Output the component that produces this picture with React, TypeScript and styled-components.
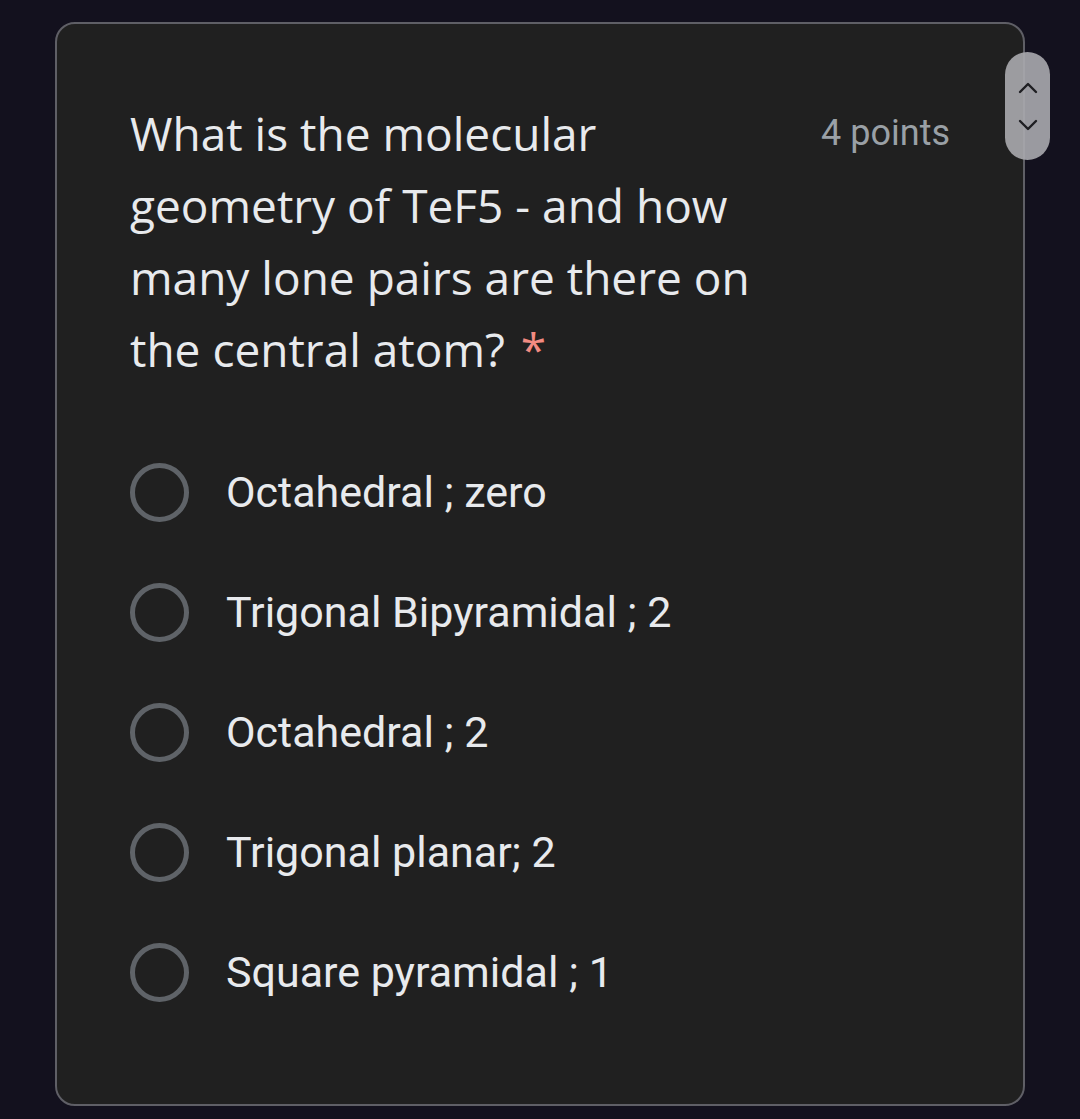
import { createGlobalStyle, styled } from 'styled-components';

const GlobalStyle = createGlobalStyle`
  html, body {
    margin: 0;
    padding: 0;
    background: #13111e;
  }
  body {
    font-family: Roboto, "Noto Sans", sans-serif;
  }
`;

const options = [
  'Octahedral ; zero',
  'Trigonal Bipyramidal ; 2',
  'Octahedral ; 2',
  'Trigonal planar; 2',
  'Square pyramidal ; 1',
];

export default function App() {
  return (
    <>
      <GlobalStyle />
      <Page>
        <Card>
          <Header>
            <Title>
              What is the molecular geometry of TeF5 - and how many lone pairs
              are there on the central atom?
              <Required>*</Required>
            </Title>
            <Points>4 points</Points>
          </Header>
          <OptionList>
            {options.map((label) => (
              <Option key={label}>
                <Radio />
                <OptionLabel>{label}</OptionLabel>
              </Option>
            ))}
          </OptionList>
        </Card>
        <Scroller>
          <Chevron viewBox="0 0 20 12">
            <path d="M2 10l8-8 8 8" />
          </Chevron>
          <Chevron viewBox="0 0 20 12">
            <path d="M2 2l8 8 8-8" />
          </Chevron>
        </Scroller>
      </Page>
    </>
  );
}

const Page = styled.div`
  position: relative;
  width: 1080px;
  height: 1119px;
  padding: 22px 0 0 55px;
  box-sizing: border-box;
`;

const Card = styled.div`
  width: 970px;
  height: 1084px;
  box-sizing: border-box;
  background: #202020;
  border: 2px solid #5f5f66;
  border-radius: 20px;
  padding: 73px 73px 0 73px;
`;

const Header = styled.div`
  display: flex;
  justify-content: space-between;
  align-items: flex-start;
`;

const Title = styled.div`
  width: 650px;
  font-family: "Open Sans", "Noto Sans", sans-serif;
  font-size: 46px;
  line-height: 72px;
  color: #e8eaed;
`;

const Required = styled.span`
  margin-left: 16px;
  color: #f28b82;
`;

const Points = styled.div`
  font-size: 36px;
  line-height: 72px;
  color: #9aa0a6;
`;

const OptionList = styled.div`
  display: flex;
  flex-direction: column;
  margin-top: 47px;
`;

const Option = styled.div`
  display: flex;
  align-items: center;
  height: 120px;
`;

const Radio = styled.div`
  width: 59px;
  height: 59px;
  box-sizing: border-box;
  border: 5px solid #5f6368;
  border-radius: 50%;
  margin-right: 37px;
  flex-shrink: 0;
`;

const OptionLabel = styled.span`
  font-size: 43px;
  color: #e8eaed;
`;

const Scroller = styled.div`
  position: absolute;
  left: 1005px;
  top: 52px;
  width: 45px;
  height: 108px;
  border-radius: 23px;
  background: rgba(170, 170, 174, 0.9);
  display: flex;
  flex-direction: column;
  align-items: center;
  justify-content: center;
  gap: 25px;
`;

const Chevron = styled.svg`
  width: 20px;
  height: 12px;
  fill: none;
  stroke: #1e1e22;
  stroke-width: 2.4;
  stroke-linecap: round;
  stroke-linejoin: round;
`;
